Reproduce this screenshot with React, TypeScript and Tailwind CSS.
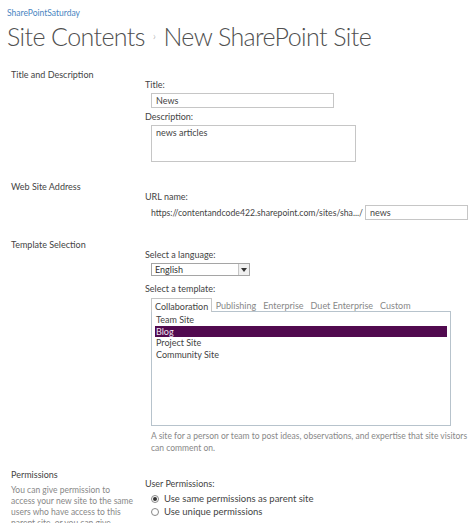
import React from "react";

const font = { fontFamily: 'Lato, "Open Sans", sans-serif' };

function Section({
  title,
  note,
  children,
  className,
  bodyClass,
}: {
  title: string;
  note?: React.ReactNode;
  children: React.ReactNode;
  className?: string;
  bodyClass?: string;
}) {
  return (
    <div className={"flex " + (className ?? "")}>
      <div className="w-[145px] shrink-0 pl-[11px] pr-2">
        <div className="text-[9px] leading-[12px] text-[#444]">{title}</div>
        {note && (
          <div className="mt-[4px] text-[8.5px] leading-[11px] text-[#888] whitespace-nowrap">{note}</div>
        )}
      </div>
      <div className={"flex-1 " + (bodyClass ?? "pt-[10px]")}>{children}</div>
    </div>
  );
}

function Label({ children }: { children: React.ReactNode }) {
  return <div className="text-[9px] leading-[12px] text-[#444]">{children}</div>;
}

export default function App() {
  const templates = ["Team Site", "Blog", "Project Site", "Community Site"];
  const tabs = ["Collaboration", "Publishing", "Enterprise", "Duet Enterprise", "Custom"];

  return (
    <div className="w-[474px] h-[523px] overflow-hidden bg-white" style={font}>
      <div className="pl-[7px] pt-[7px]">
        <div className="text-[8.5px] leading-[12px] text-[#4a85bf]">SharePointSaturday</div>
        <div className="flex items-center text-[25px] leading-[30px] font-light tracking-[-0.6px] text-[#505050] mt-[2px]">
          <span>Site Contents</span>
          <span className="mx-[8px] text-[12px] text-[#999]">›</span>
          <span>New SharePoint Site</span>
        </div>
      </div>

      <Section title="Title and Description" className="mt-[18px]">
        <Label>Title:</Label>
        <div className="ml-[6px] mt-[2px] w-[183px] h-[15px] border border-[#c6c6c6] px-[4px] text-[9px] leading-[13px] text-[#444]">
          News
        </div>
        <div className="mt-[3px]">
          <Label>Description:</Label>
        </div>
        <div className="ml-[6px] mt-[2px] w-[205px] h-[37px] border border-[#c6c6c6] px-[4px] pt-[1px] text-[9px] leading-[12px] text-[#444]">
          news articles
        </div>
      </Section>

      <Section title="Web Site Address" className="mt-[19px]">
        <Label>URL name:</Label>
        <div className="flex items-center ml-[6px] mt-[2px]">
          <span className="text-[8.7px] leading-[12px] text-[#444] whitespace-nowrap">
            https://contentandcode422.sharepoint.com/sites/sha.../
          </span>
          <div className="ml-[2px] w-[103px] h-[15px] border border-[#c6c6c6] px-[4px] text-[9px] leading-[13px] text-[#444]">
            news
          </div>
        </div>
      </Section>

      <Section title="Template Selection" className="mt-[19px]">
        <Label>Select a language:</Label>
        <div className="ml-[6px] mt-[2px] flex w-[99px] h-[13px] border border-[#a5a5a5] text-[9px] leading-[11px] text-[#333]">
          <span className="flex-1 pl-[3px]">English</span>
          <span className="w-[11px] border-l border-[#c6c6c6] bg-[#f0f0f0] flex items-center justify-center">
            <svg width="6" height="5" viewBox="0 0 6 5">
              <path d="M0 1h6L3 5z" fill="#333" />
            </svg>
          </span>
        </div>
        <div className="mt-[7px]">
          <Label>Select a template:</Label>
        </div>
        <div className="ml-[6px] mt-[2px] w-[300px]">
          <div className="flex h-[14px] text-[9px] leading-[13px]">
            {tabs.map((t, i) => (
              <span
                key={t}
                className={
                  i === 0
                    ? "px-[3px] border border-b-0 border-[#c6c6c6] bg-white text-[#444] relative top-[1px] pt-[1px]"
                    : "px-[3.5px] text-[#888] pt-[2px]"
                }
              >
                {t}
              </span>
            ))}
          </div>
          <div className="h-[115px] border border-[#b7c3cc] pt-[2px] px-[3px]">
            {templates.map((t, i) => (
              <div
                key={t}
                className={
                  "text-[9px] leading-[11.5px] pl-[1px] " +
                  (i === 1 ? "bg-[#510a4f] text-[#f2e6f2]" : "text-[#444]")
                }
              >
                {t}
              </div>
            ))}
          </div>
          <div className="mt-[4px] text-[8.5px] leading-[12px] text-[#888] whitespace-nowrap">
            A site for a person or team to post ideas, observations, and expertise that site visitors
            <br />
            can comment on.
          </div>
        </div>
      </Section>

      <Section
        title="Permissions"
        note={
          <>
            You can give permission to
            <br />
            access your new site to the same
            <br />
            users who have access to this
            <br />
            parent site, or you can give
          </>
        }
        className="mt-[15px]"
        bodyClass="pt-[9px]"
      >
        <Label>User Permissions:</Label>
        <div className="ml-[6px] mt-[2px] flex flex-col">
          <div className="flex items-center gap-[5px] text-[9.5px] leading-[13px] text-[#444]">
            <span className="w-[8px] h-[8px] rounded-full border border-[#888] flex items-center justify-center">
              <span className="w-[4px] h-[4px] rounded-full bg-[#333]" />
            </span>
            Use same permissions as parent site
          </div>
          <div className="flex items-center gap-[5px] text-[9.5px] leading-[13px] text-[#444]">
            <span className="w-[8px] h-[8px] rounded-full border border-[#888]" />
            Use unique permissions
          </div>
        </div>
      </Section>
    </div>
  );
}
